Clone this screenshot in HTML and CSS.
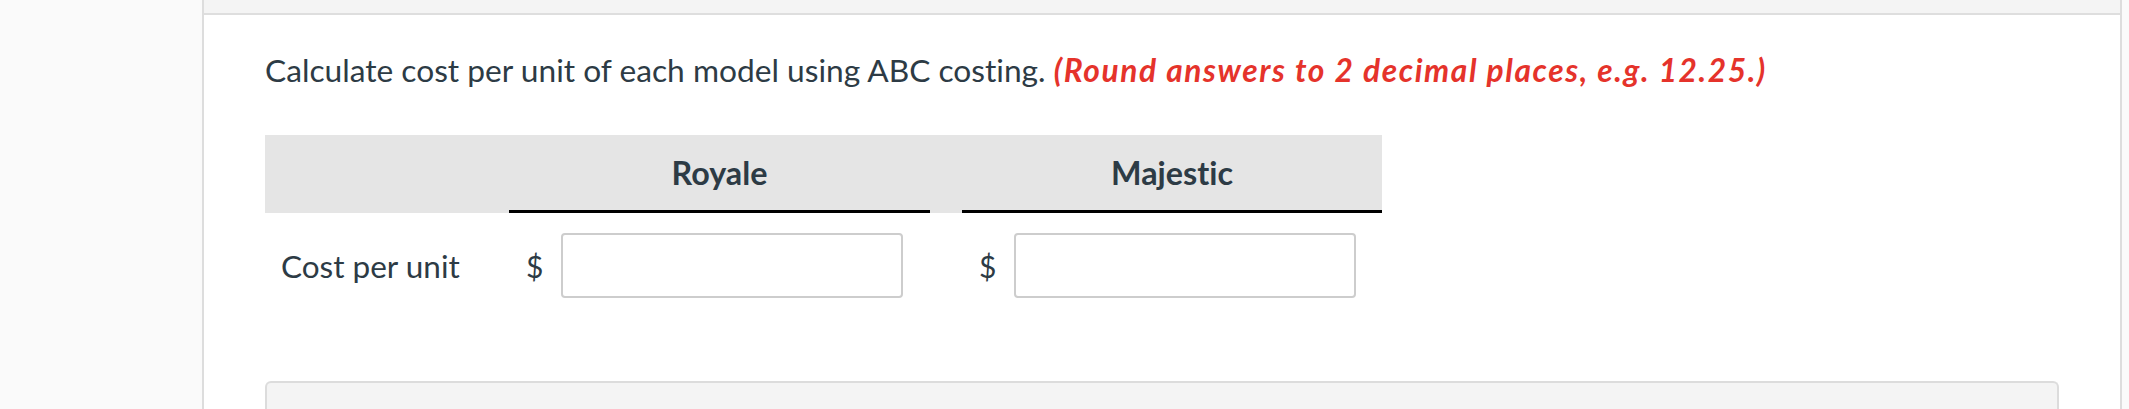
FILE: index.html
```html
<!DOCTYPE html>
<html lang="en">
<head>
<meta charset="utf-8">
<title>ABC costing</title>
<link rel="stylesheet" href="styles.css">
</head>
<body>
<div class="app">
  <aside class="side"></aside>
  <main class="main">
    <div class="topbar"></div>
    <div class="content">
      <p class="prompt">Calculate cost per unit of each model using ABC costing. <strong class="hint">(Round answers to 2 decimal places, e.g. 12.25.)</strong></p>
      <div class="table">
        <div class="th th-blank"></div>
        <div class="th th-model">Royale</div>
        <div class="th th-gap"></div>
        <div class="th th-model">Majestic</div>

        <div class="td td-label">Cost per unit</div>
        <div class="td td-input"><span class="cur">$</span><input class="field" type="text"></div>
        <div class="td td-gap"></div>
        <div class="td td-input"><span class="cur">$</span><input class="field" type="text"></div>
      </div>
      <div class="panel"></div>
    </div>
  </main>
  <div class="rail"></div>
</div>
</body>
</html>
```

FILE: styles.css
```css
html, body {
  margin: 0;
  padding: 0;
  height: 409px;
  overflow: hidden;
  background: #ffffff;
  font-family: Lato, "Noto Sans", sans-serif;
  font-variant-ligatures: no-common-ligatures;
  color: #2d3b45;
}

.app {
  display: flex;
  height: 409px;
  overflow: hidden;
}

.side {
  width: 202px;
  flex: none;
  background: #fafafa;
  border-right: 2px solid #dddddd;
}

.main {
  flex: 1;
  display: flex;
  flex-direction: column;
  background: #ffffff;
  border-right: 2px solid #dddddd;
  min-width: 0;
  overflow: hidden;
}

.rail {
  width: 7px;
  flex: none;
  background: #fafafa;
}

.topbar {
  height: 13px;
  flex: none;
  background: #f4f4f4;
  border-bottom: 2px solid #dedede;
}

.content {
  padding: 0 61px;
}

.prompt {
  margin: 35px 0 0;
  font-size: 31.7px;
  line-height: 40px;
}

.hint {
  color: #e5332b;
  font-weight: 700;
  font-style: italic;
  letter-spacing: 1.6px;
}

.table {
  margin-top: 45px;
  width: 1117px;
  display: grid;
  grid-template-columns: 244px 421px 32px 420px;
}

.th {
  height: 75px;
  background: #e5e5e5;
  border-bottom: 3px solid transparent;
}

.th-model {
  display: flex;
  align-items: center;
  justify-content: center;
  font-size: 32.3px;
  font-weight: 700;
  border-bottom-color: #000000;
}

.td {
  margin-top: 20px;
  height: 65px;
  display: flex;
  align-items: center;
}

.td-label {
  font-size: 31.5px;
  padding-left: 16px;
}

.td-input {
  padding-left: 17px;
}

.cur {
  width: 35px;
  font-size: 30px;
}

.field {
  box-sizing: border-box;
  width: 342px;
  height: 65px;
  margin: 0;
  border: 2px solid #cdcdcd;
  border-radius: 4px;
  background: #ffffff;
  font: inherit;
  padding: 0 10px;
}

.panel {
  margin-top: 83px;
  height: 26px;
  background: #f4f4f4;
  border: 2px solid #dcdcdc;
  border-bottom: 0;
  border-radius: 6px 6px 0 0;
}
```
